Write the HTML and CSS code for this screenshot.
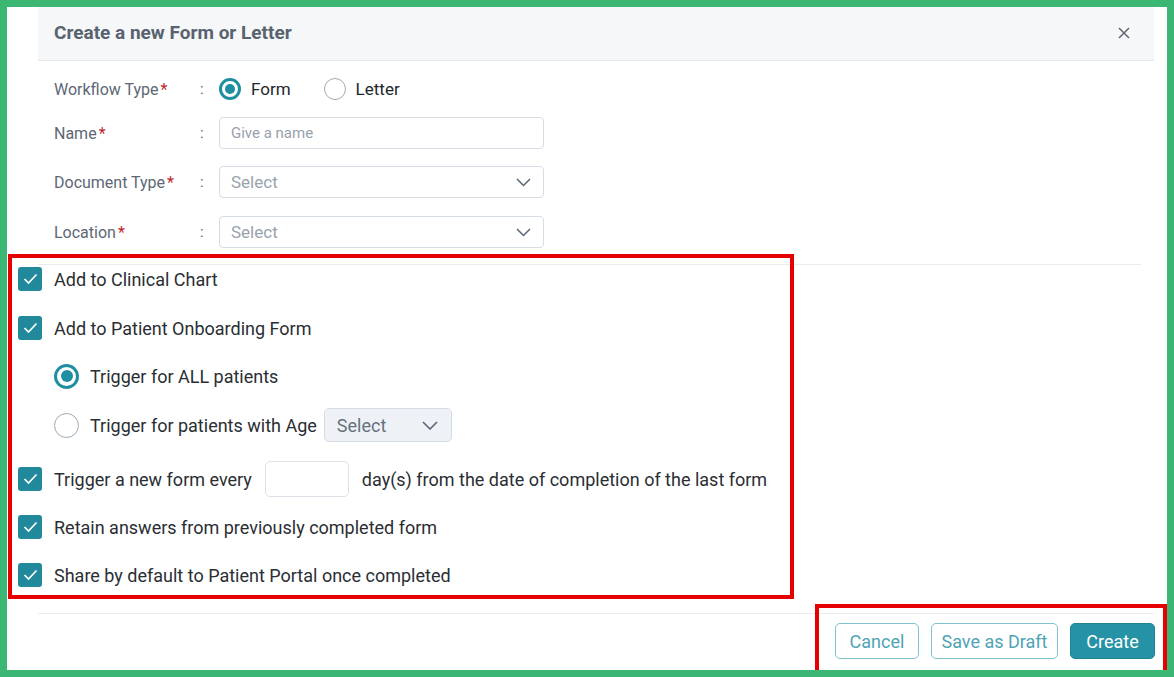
FILE: index.html
```html
<!DOCTYPE html>
<html lang="en">
<head>
<meta charset="utf-8">
<title>Create a new Form or Letter</title>
<link rel="stylesheet" href="styles.css">
</head>
<body>
<div class="screen">
  <div class="modal">
    <div class="modal-header">
      <h1 class="title">Create a new Form or Letter</h1>
      <button class="close" aria-label="Close">
        <svg width="12" height="12" viewBox="0 0 12 12"><path d="M1 1 L11 11 M11 1 L1 11" stroke="#5f6873" stroke-width="1.5" fill="none"/></svg>
      </button>
    </div>

    <div class="form">
      <div class="row row-first">
        <div class="label">Workflow Type<span class="req">*</span></div>
        <div class="colon">:</div>
        <div class="radios">
          <label class="radio-item"><span class="radio radio-sm on"></span><span>Form</span></label>
          <label class="radio-item"><span class="radio radio-sm"></span><span>Letter</span></label>
        </div>
      </div>
      <div class="row row-name">
        <div class="label">Name<span class="req">*</span></div>
        <div class="colon">:</div>
        <div class="field"><span class="placeholder small">Give a name</span></div>
      </div>
      <div class="row">
        <div class="label">Document Type<span class="req">*</span></div>
        <div class="colon">:</div>
        <div class="field select"><span class="placeholder">Select</span>
          <svg class="chev" width="15" height="9" viewBox="0 0 15 9"><path d="M1 1 L7.5 7.5 L14 1" stroke="#5b6573" stroke-width="1.5" fill="none"/></svg>
        </div>
      </div>
      <div class="row row-loc">
        <div class="label">Location<span class="req">*</span></div>
        <div class="colon">:</div>
        <div class="field select"><span class="placeholder">Select</span>
          <svg class="chev" width="15" height="9" viewBox="0 0 15 9"><path d="M1 1 L7.5 7.5 L14 1" stroke="#5b6573" stroke-width="1.5" fill="none"/></svg>
        </div>
      </div>
    </div>

    <div class="divider divider-top"></div>

    <div class="options">
      <div class="opt">
        <span class="check"><svg width="15" height="12" viewBox="0 0 15 12"><path d="M1.5 6 L5.5 10 L13.5 1.5" stroke="#fff" stroke-width="1.7" fill="none"/></svg></span>
        <span>Add to Clinical Chart</span>
      </div>
      <div class="opt nudge">
        <span class="check"><svg width="15" height="12" viewBox="0 0 15 12"><path d="M1.5 6 L5.5 10 L13.5 1.5" stroke="#fff" stroke-width="1.7" fill="none"/></svg></span>
        <span>Add to Patient Onboarding Form</span>
      </div>
      <div class="opt sub">
        <span class="radio on"></span>
        <span>Trigger for ALL patients</span>
      </div>
      <div class="opt sub nudge">
        <span class="radio"></span>
        <span>Trigger for patients with Age</span>
        <div class="age-select"><span>Select</span>
          <svg width="16" height="9" viewBox="0 0 16 9"><path d="M1 1 L8 8 L15 1" stroke="#5b6573" stroke-width="1.6" fill="none"/></svg>
        </div>
      </div>
      <div class="opt opt-days">
        <span class="check"><svg width="15" height="12" viewBox="0 0 15 12"><path d="M1.5 6 L5.5 10 L13.5 1.5" stroke="#fff" stroke-width="1.7" fill="none"/></svg></span>
        <span>Trigger a new form every</span>
        <span class="days-input"></span>
        <span>day(s) from the date of completion of the last form</span>
      </div>
      <div class="opt">
        <span class="check"><svg width="15" height="12" viewBox="0 0 15 12"><path d="M1.5 6 L5.5 10 L13.5 1.5" stroke="#fff" stroke-width="1.7" fill="none"/></svg></span>
        <span>Retain answers from previously completed form</span>
      </div>
      <div class="opt">
        <span class="check"><svg width="15" height="12" viewBox="0 0 15 12"><path d="M1.5 6 L5.5 10 L13.5 1.5" stroke="#fff" stroke-width="1.7" fill="none"/></svg></span>
        <span>Share by default to Patient Portal once completed</span>
      </div>
    </div>

    <div class="divider divider-bottom"></div>

    <div class="footer">
      <button class="btn btn-outline btn-cancel">Cancel</button>
      <button class="btn btn-outline btn-draft">Save as Draft</button>
      <button class="btn btn-primary">Create</button>
    </div>
  </div>

  <div class="annot annot-options"></div>
  <div class="annot annot-footer"></div>
</div>
</body>
</html>
```

FILE: styles.css
```css
* { box-sizing: border-box; }

html, body {
  margin: 0;
  padding: 0;
}

body {
  background: #3bb673;
  padding: 7px;
  font-family: Roboto, "Liberation Sans", Arial, sans-serif;
}

.screen {
  position: relative;
  background: #ffffff;
  height: 663px;
  overflow: hidden;
}

.modal {
  margin-left: 31px;
  width: 1116px;
}

.modal-header {
  height: 54px;
  background: #f6f7f9;
  border-bottom: 1px solid #e6e9ec;
  display: flex;
  align-items: center;
  justify-content: space-between;
  padding: 0 24px 2px 16px;
}

.title {
  margin: 0;
  font-size: 19px;
  font-weight: 700;
  color: #59626f;
}

.close {
  border: 0;
  background: transparent;
  padding: 0;
  width: 12px;
  height: 12px;
  display: flex;
}

.form {
  padding: 0 16px;
}

.row {
  display: flex;
  align-items: center;
  height: 32px;
  margin-top: 17px;
}

.row-first { margin-top: 12px; }
.row-name { margin-top: 12px; }
.row-loc { margin-top: 18px; }

.label {
  width: 146px;
  font-size: 16px;
  color: #5d6775;
}

.req {
  color: #c0262d;
  margin-left: 2px;
}

.colon {
  width: 19px;
  font-size: 15px;
  color: #5d6775;
}

.radios {
  display: flex;
  gap: 33px;
}

.radio-item {
  display: flex;
  align-items: center;
  gap: 10px;
  font-size: 17px;
  color: #23272b;
}

.radio {
  width: 25px;
  height: 25px;
  border-radius: 50%;
  border: 1px solid #9eaab6;
  background: #fff;
  flex: none;
  position: relative;
}

.radio.on {
  border: 3px solid #1f8ea0;
}

.radio.on::after {
  content: "";
  position: absolute;
  left: 50%;
  top: 50%;
  width: 12px;
  height: 12px;
  margin: -6px 0 0 -6px;
  border-radius: 50%;
  background: #1f8ea0;
}

.radio-sm {
  width: 22px;
  height: 22px;
}

.radio-sm.on::after {
  width: 10px;
  height: 10px;
  margin: -5px 0 0 -5px;
}

.field {
  width: 325px;
  height: 32px;
  border: 1px solid #d7dde4;
  border-radius: 4px;
  display: flex;
  align-items: center;
  justify-content: space-between;
  padding: 0 12px 0 11px;
}

.placeholder {
  font-size: 17px;
  color: #98a2ad;
}

.placeholder.small {
  font-size: 15px;
}

.chev { flex: none; }

.divider {
  height: 1px;
  background: #e9ebee;
}

.divider-top {
  margin-top: 16px;
  margin-right: 13px;
}

.options {
  margin-left: -20px;
  margin-top: 1px;
  display: flex;
  flex-direction: column;
  gap: 22px;
}

.opt {
  height: 26px;
  display: flex;
  align-items: center;
  font-size: 18px;
  color: #2a2e33;
}

.opt.nudge { margin-top: 1px; }
.opt-days { margin-top: 6px; }

.check {
  width: 24px;
  height: 24px;
  border-radius: 3px;
  background: #21899b;
  display: flex;
  align-items: center;
  justify-content: center;
  margin-right: 12px;
  flex: none;
}

.opt.sub {
  padding-left: 36px;
}

.opt.sub .radio {
  margin-right: 11px;
}

.age-select {
  margin-left: 7px;
  width: 128px;
  height: 34px;
  background: #eef1f5;
  border: 1px solid #d6dce3;
  border-radius: 5px;
  display: flex;
  align-items: center;
  justify-content: space-between;
  padding: 0 13px 0 12px;
  font-size: 18px;
  color: #66717e;
}

.days-input {
  width: 84px;
  height: 36px;
  border: 1px solid #dde2e8;
  border-radius: 5px;
  margin: 0 13px 0 13px;
}

.divider-bottom {
  margin-top: 25px;
}

.footer {
  display: flex;
  justify-content: flex-end;
  gap: 12px;
  padding-top: 9px;
  margin-right: -1px;
}

.btn {
  height: 36px;
  border-radius: 5px;
  font-family: Roboto, "Liberation Sans", Arial, sans-serif;
  font-size: 18px;
  padding: 0;
  cursor: pointer;
}

.btn-outline {
  background: #fff;
  border: 1.5px solid #7fc2ce;
  color: #4ea4b4;
}

.btn-cancel { width: 84px; }
.btn-draft { width: 127px; }

.btn-primary {
  width: 85px;
  background: #2592a6;
  border: 1px solid #1f8396;
  color: #ffffff;
}

.annot {
  position: absolute;
  border: 4px solid #e60000;
  pointer-events: none;
}

.annot-options {
  left: 1px;
  top: 247px;
  width: 786px;
  height: 345px;
}

.annot-footer {
  left: 808px;
  top: 597px;
  width: 352px;
  height: 70px;
}
```
